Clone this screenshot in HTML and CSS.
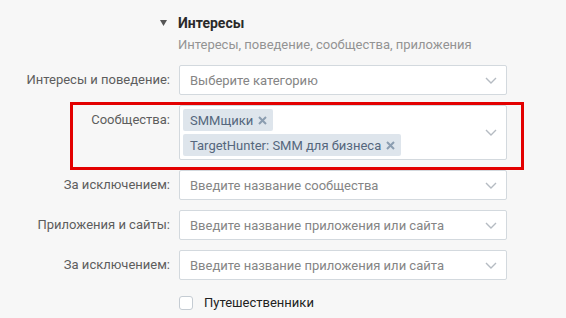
FILE: index.html
```html
<!DOCTYPE html>
<html lang="ru">
<head>
  <meta charset="utf-8">
  <title>Интересы</title>
  <link rel="stylesheet" href="styles.css">
</head>
<body>
<div class="section">
  <div class="head">
    <svg class="arrow" width="7" height="6" viewBox="0 0 7 6"><polygon points="0,0 7,0 3.5,6" fill="#555"/></svg>
    <span class="title">Интересы</span>
  </div>
  <div class="subtitle">Интересы, поведение, сообщества, приложения</div>

  <div class="form">
    <div class="row">
      <label class="label">Интересы и поведение:</label>
      <div class="select">
        <span class="placeholder">Выберите категорию</span>
        <svg class="chevron" width="12" height="7" viewBox="0 0 12 7"><polyline points="1,1 6,6 11,1" fill="none" stroke="#b5bbc2" stroke-width="1.4"/></svg>
      </div>
    </div>

    <div class="row marked">
      <label class="label">Сообщества:</label>
      <div class="select multi">
        <div class="chips">
          <span class="chip">SMMщики
            <svg width="9" height="9" viewBox="0 0 9 9"><path d="M1 1L8 8M8 1L1 8" stroke="#8b9db0" stroke-width="2"/></svg>
          </span>
          <span class="chip">TargetHunter: SMM для бизнеса
            <svg width="9" height="9" viewBox="0 0 9 9"><path d="M1 1L8 8M8 1L1 8" stroke="#8b9db0" stroke-width="2"/></svg>
          </span>
        </div>
        <svg class="chevron" width="12" height="7" viewBox="0 0 12 7"><polyline points="1,1 6,6 11,1" fill="none" stroke="#b5bbc2" stroke-width="1.4"/></svg>
      </div>
    </div>

    <div class="row">
      <label class="label">За исключением:</label>
      <div class="select">
        <span class="placeholder">Введите название сообщества</span>
        <svg class="chevron" width="12" height="7" viewBox="0 0 12 7"><polyline points="1,1 6,6 11,1" fill="none" stroke="#b5bbc2" stroke-width="1.4"/></svg>
      </div>
    </div>

    <div class="row">
      <label class="label">Приложения и сайты:</label>
      <div class="select">
        <span class="placeholder">Введите название приложения или сайта</span>
        <svg class="chevron" width="12" height="7" viewBox="0 0 12 7"><polyline points="1,1 6,6 11,1" fill="none" stroke="#b5bbc2" stroke-width="1.4"/></svg>
      </div>
    </div>

    <div class="row">
      <label class="label">За исключением:</label>
      <div class="select">
        <span class="placeholder">Введите название приложения или сайта</span>
        <svg class="chevron" width="12" height="7" viewBox="0 0 12 7"><polyline points="1,1 6,6 11,1" fill="none" stroke="#b5bbc2" stroke-width="1.4"/></svg>
      </div>
    </div>

    <div class="row">
      <span></span>
      <label class="check"><span class="box"></span>Путешественники</label>
    </div>
  </div>
</div>
</body>
</html>
```

FILE: styles.css
```css
body {
  margin: 0;
  background: #f7f7f7;
  font-family: Roboto, "Liberation Sans", sans-serif;
  font-size: 13px;
  color: #222;
}

.section {
  padding-top: 13px;
}

.head {
  display: flex;
  align-items: center;
  gap: 11px;
  margin-left: 160px;
  height: 20px;
}

.title {
  font-size: 14px;
  font-weight: bold;
  color: #2a2a2a;
}

.subtitle {
  margin: 3px 0 0 178px;
  line-height: 18px;
  color: #939393;
}

.form {
  display: grid;
  grid-template-columns: 170px 328px;
  column-gap: 9px;
  row-gap: 10px;
  margin-top: 11px;
}

.row {
  display: contents;
}

.label {
  text-align: right;
  line-height: 30px;
  color: #5d5d5d;
  white-space: nowrap;
}

.select {
  display: flex;
  align-items: center;
  justify-content: space-between;
  box-sizing: border-box;
  height: 30px;
  padding: 0 9px 0 10px;
  background: #fff;
  border: 1px solid #d3d9de;
  border-radius: 2px;
}

.placeholder {
  color: #858585;
}

.marked .select {
  position: relative;
}

/* red highlight frame drawn over the row */
.marked .select::after {
  content: "";
  position: absolute;
  top: -4px;
  bottom: -11px;
  left: -110px;
  right: -18px;
  border: 3px solid #e30000;
  pointer-events: none;
}

.multi {
  height: auto;
  padding: 3px 9px 3px 3px;
}

.chips {
  display: flex;
  flex-direction: column;
  align-items: flex-start;
  gap: 3px;
}

.chip {
  display: flex;
  align-items: center;
  gap: 5px;
  height: 22px;
  padding: 0 6px 0 7px;
  background: #dee5ec;
  border-radius: 2px;
  color: #55677d;
}

.check {
  display: flex;
  align-items: center;
  gap: 11px;
  margin-top: 3px;
  line-height: 20px;
  color: #222;
}

.box {
  width: 14px;
  height: 14px;
  box-sizing: border-box;
  background: #fff;
  border: 1px solid #c5ccd3;
  border-radius: 3px;
}
```
